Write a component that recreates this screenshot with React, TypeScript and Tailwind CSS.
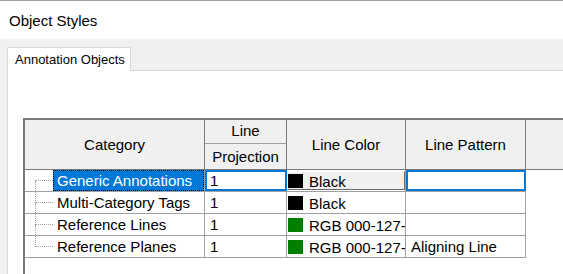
import React from "react";

type Row = {
  name: string;
  weight: string;
  color: string;
  swatch: string;
  pattern: string;
};

const rows: Row[] = [
  { name: "Generic Annotations", weight: "1", color: "Black", swatch: "bg-black", pattern: "" },
  { name: "Multi-Category Tags", weight: "1", color: "Black", swatch: "bg-black", pattern: "" },
  { name: "Reference Lines", weight: "1", color: "RGB 000-127-000", swatch: "bg-[#007f00]", pattern: "" },
  { name: "Reference Planes", weight: "1", color: "RGB 000-127-000", swatch: "bg-[#007f00]", pattern: "Aligning Line" },
];

function TreeLines({ first, last }: { first: boolean; last: boolean }) {
  // dotted connector like the classic win32 tree view
  return (
    <div className="ml-[10px] flex w-[18px] shrink-0 flex-col self-stretch">
      <div
        className={`h-[11px] border-b border-dotted border-[#a0a0a0] ${
          first ? "" : "border-l"
        }`}
      />
      <div className={`flex-1 border-dotted border-[#a0a0a0] ${last ? "" : "border-l"}`} />
    </div>
  );
}

function DataRow({ row, index }: { row: Row; index: number }) {
  const selected = index === 0;
  return (
    <div className="flex h-[22px] w-[501px] border-b border-[#a0a0a0]">
      <div className="flex w-[180px] shrink-0 border-r border-[#a0a0a0]">
        <TreeLines first={index === 0} last={index === rows.length - 1} />
        <div
          className={`flex flex-1 items-center pl-[4px] pt-px ${
            selected ? "bg-[#0078d7] text-white outline-1 -outline-offset-1 outline-dotted outline-black" : ""
          }`}
        >
          {row.name}
        </div>
      </div>
      <div
        className={`flex w-[82px] shrink-0 items-center pt-px ${
          selected ? "border-2 border-[#0078d7] pl-[3px]" : "border-r border-[#a0a0a0] pl-[5px]"
        }`}
      >
        {row.weight}
      </div>
      <div className="flex w-[119px] shrink-0 overflow-hidden border-r border-[#a0a0a0]">
        <div
          className={`flex flex-1 items-center gap-[6px] overflow-hidden whitespace-nowrap ${
            selected
              ? "my-[1px] border border-b-[#696969] border-l-white border-r-[#696969] border-t-white bg-[#f0f0f0]"
              : "pl-[1px]"
          }`}
        >
          <span className={`h-[14px] w-[15px] shrink-0 ${row.swatch}`} />
          <span className="mt-[3px]">{row.color}</span>
        </div>
      </div>
      <div
        className={`flex w-[120px] shrink-0 items-center whitespace-nowrap pt-px ${
          selected ? "border-2 border-[#0078d7] pl-[4px]" : "border-r border-[#a0a0a0] pl-[5px]"
        }`}
      >
        {row.pattern}
      </div>
    </div>
  );
}

export default function App() {
  return (
    <div className="flex h-[274px] w-[563px] flex-col overflow-hidden bg-[#f0f0f0] font-['Liberation_Sans',Arial,sans-serif] text-black">
      <div className="flex h-[39px] shrink-0 items-center border-t border-[#a0a0a0] bg-white pl-[9px] pt-[2px] text-[15px]">
        Object Styles
      </div>

      <div className="flex shrink-0 pl-[7px] pt-[8px]">
        <div className="relative z-10 -mb-px flex h-[24px] w-[124px] items-center border border-b-0 border-[#d9d9d9] bg-white pl-[7px] pt-px text-[13px]">
          Annotation Objects
        </div>
      </div>

      <div className="ml-[7px] flex-1 border-l border-t border-[#d9d9d9] bg-white">
        <div className="ml-[15px] mt-[47px] h-full w-[600px] border-l-2 border-t-2 border-[#7a7a7a] text-[15px]">
          <div className="flex h-[50px] border-b border-[#7a7a7a] bg-[#f0f0f0]">
            <div className="flex w-[180px] shrink-0 items-center justify-center border-r border-[#7a7a7a] pt-px">
              Category
            </div>
            <div className="flex w-[82px] shrink-0 flex-col border-r border-[#7a7a7a]">
              <div className="flex h-[24px] items-center justify-center border-b border-[#a0a0a0]">Line</div>
              <div className="flex flex-1 items-center justify-center pt-px">Projection</div>
            </div>
            <div className="flex w-[119px] shrink-0 items-center justify-center border-r border-[#7a7a7a] pt-px">
              Line Color
            </div>
            <div className="flex w-[120px] shrink-0 items-center justify-center border-r border-[#7a7a7a] pt-px">
              Line Pattern
            </div>
            <div className="flex-1" />
          </div>
          {rows.map((row, i) => (
            <DataRow key={row.name} row={row} index={i} />
          ))}
        </div>
      </div>
    </div>
  );
}
